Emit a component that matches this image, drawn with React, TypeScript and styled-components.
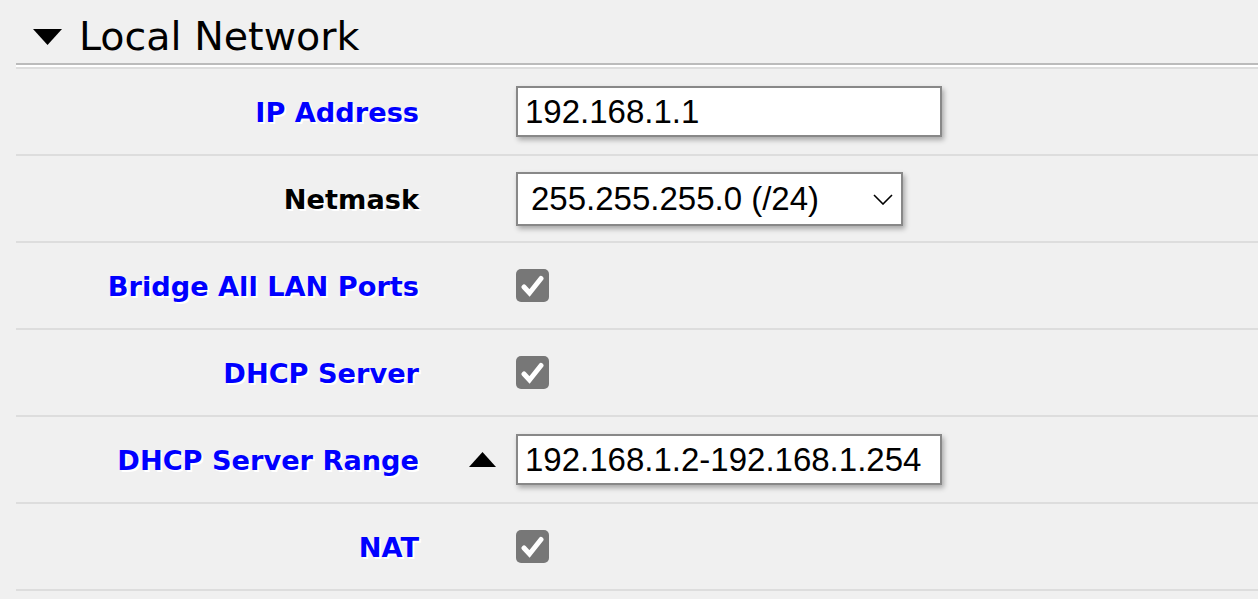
import React from "react"
import styled, { createGlobalStyle } from "styled-components"

const GlobalStyle = createGlobalStyle`
  html, body {
    margin: 0;
    padding: 0;
    background: #f0f0f0;
    font-family: "DejaVu Sans", Verdana, sans-serif;
    overflow: hidden;
  }
`

const Page = styled.div`
  padding-left: 16px;
`

const Heading = styled.h2`
  display: flex;
  align-items: center;
  gap: 17px;
  margin: 0;
  padding: 13px 0 3px 17px;
  line-height: 47px;
  font-size: 39.6px;
  font-weight: normal;
  color: #000;
  border-bottom: 2px solid #bbb;
  box-shadow: 0 2px 0 #fff;
`

const Rows = styled.div`
  margin-top: 2px;
  border-top: 2px solid #ddd;
`

const Row = styled.div`
  display: grid;
  grid-template-columns: 403px 97px 1fr;
  align-items: center;
  height: 85px;
  border-bottom: 2px solid #ddd;
`

const Label = styled.div<{ $link?: boolean }>`
  justify-self: end;
  padding-top: 2px;
  font-size: 27.2px;
  font-weight: bold;
  color: ${(p) => (p.$link ? "#0000ff" : "#000")};
  text-shadow: 2px 2px 0 #fff;
  white-space: nowrap;
`

const Marker = styled.div`
  justify-self: end;
  padding-right: 20px;
  display: flex;
  align-items: center;
`

const TextInput = styled.input`
  box-sizing: border-box;
  width: 426px;
  height: 51px;
  padding: 0 7px;
  border: 2px solid #888;
  background: #fff;
  font-family: "Liberation Sans", Arial, sans-serif;
  font-size: 33px;
  color: #000;
  box-shadow: 2px 3px 5px rgba(0, 0, 0, 0.3);
  outline: none;
`

const SelectWrap = styled.div`
  position: relative;
  width: 387px;
  height: 54px;
`

const Select = styled.select`
  box-sizing: border-box;
  width: 100%;
  height: 100%;
  padding: 0 40px 0 13px;
  border: 2px solid #888;
  border-radius: 0;
  background: #fff;
  appearance: none;
  font-family: "Liberation Sans", Arial, sans-serif;
  font-size: 33px;
  color: #000;
  box-shadow: 2px 3px 5px rgba(0, 0, 0, 0.3);
  outline: none;
`

const Chevron = styled.svg`
  position: absolute;
  right: 10px;
  top: 22px;
  pointer-events: none;
`

const CheckBox = styled.span`
  display: inline-flex;
  align-items: center;
  justify-content: center;
  width: 33px;
  height: 33px;
  border-radius: 5px;
  background: #777;
`

const DownTriangle = () => (
  <svg width="29" height="16" viewBox="0 0 29 16">
    <polygon points="0,0 29,0 14.5,16" fill="#000" />
  </svg>
)

const UpTriangle = () => (
  <svg width="27" height="15" viewBox="0 0 27 15">
    <polygon points="0,15 27,15 13.5,0" fill="#000" />
  </svg>
)

const Checked = () => (
  <CheckBox>
    <svg width="23" height="22" viewBox="0 0 23 22">
      <path
        d="M3 12 L8.5 18 L20 3.5"
        fill="none"
        stroke="#fff"
        strokeWidth="5"
        strokeLinecap="round"
        strokeLinejoin="miter"
      />
    </svg>
  </CheckBox>
)

export default function App() {
  return (
    <Page>
      <GlobalStyle />
      <Heading>
        <DownTriangle />
        Local Network
      </Heading>
      <Rows>
        <Row>
          <Label $link>IP Address</Label>
          <div />
          <TextInput defaultValue="192.168.1.1" />
        </Row>
        <Row>
          <Label>Netmask</Label>
          <div />
          <SelectWrap>
            <Select defaultValue="24">
              <option value="24">255.255.255.0 (/24)</option>
            </Select>
            <Chevron width="20" height="11" viewBox="0 0 20 11">
              <path d="M1 1 L10 10 L19 1" fill="none" stroke="#000" strokeWidth="1.6" />
            </Chevron>
          </SelectWrap>
        </Row>
        <Row>
          <Label $link>Bridge All LAN Ports</Label>
          <div />
          <Checked />
        </Row>
        <Row>
          <Label $link>DHCP Server</Label>
          <div />
          <Checked />
        </Row>
        <Row>
          <Label $link>DHCP Server Range</Label>
          <Marker>
            <UpTriangle />
          </Marker>
          <TextInput defaultValue="192.168.1.2-192.168.1.254" />
        </Row>
        <Row>
          <Label $link>NAT</Label>
          <div />
          <Checked />
        </Row>
      </Rows>
    </Page>
  )
}
